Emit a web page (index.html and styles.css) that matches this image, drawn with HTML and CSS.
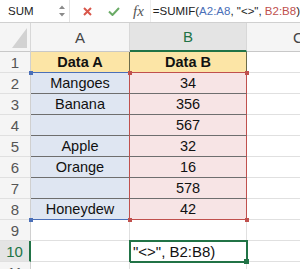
FILE: index.html
```html
<!DOCTYPE html>
<html lang="en">
<head>
    <meta charset="UTF-8">
    <title>SUMIF not blank</title>
    <link rel="stylesheet" href="styles.css">
</head>
<body>
    <div class="toolbar">
        <div class="namebox">
            <span class="name">SUM</span>
            <span class="spin">
                <svg width="6" height="12" viewBox="0 0 6 12"><path d="M0 4 L3 0.5 L6 4 Z M0 8 L3 11.5 L6 8 Z" fill="#8a8a8a"/></svg>
            </span>
        </div>
        <div class="actions">
            <svg class="icon-cancel" width="9" height="9" viewBox="0 0 9 9"><path d="M1 1 L8 8 M8 1 L1 8" stroke="#d9574b" stroke-width="2" fill="none"/></svg>
            <svg class="icon-enter" width="12" height="9" viewBox="0 0 12 9"><path d="M1 4.5 L4.5 8 L11 1" stroke="#6aab66" stroke-width="2" fill="none"/></svg>
            <span class="fx">fx</span>
        </div>
        <div class="formula">=SUMIF(<span class="ref-a">A2:A8</span>, "&lt;&gt;", <span class="ref-b">B2:B8</span>)</div>
    </div>

    <div class="sheet">
        <div class="cell head corner"></div>
        <div class="cell head">A</div>
        <div class="cell head active-col">B</div>
        <div class="cell head col-c">C</div>

        <div class="cell rownum">1</div>
        <div class="cell title a-title"><b>Data A</b><span class="handle blue tl"></span></div>
        <div class="cell title b-title"><b>Data B</b><span class="handle red bl"></span><span class="handle red br"></span></div>
        <div class="cell"></div>

        <div class="cell rownum">2</div>
        <div class="cell a">Mangoes</div>
        <div class="cell b">34</div>
        <div class="cell"></div>

        <div class="cell rownum">3</div>
        <div class="cell a">Banana</div>
        <div class="cell b">356</div>
        <div class="cell"></div>

        <div class="cell rownum">4</div>
        <div class="cell a"></div>
        <div class="cell b">567</div>
        <div class="cell"></div>

        <div class="cell rownum">5</div>
        <div class="cell a">Apple</div>
        <div class="cell b">32</div>
        <div class="cell"></div>

        <div class="cell rownum">6</div>
        <div class="cell a">Orange</div>
        <div class="cell b">16</div>
        <div class="cell"></div>

        <div class="cell rownum">7</div>
        <div class="cell a"></div>
        <div class="cell b">578</div>
        <div class="cell"></div>

        <div class="cell rownum">8</div>
        <div class="cell a a-last">Honeydew<span class="handle blue bl"></span></div>
        <div class="cell b b-last">42<span class="handle red bl"></span><span class="handle red br"></span></div>
        <div class="cell"></div>

        <div class="cell rownum">9</div>
        <div class="cell"></div>
        <div class="cell"></div>
        <div class="cell"></div>

        <div class="cell rownum active-row">10</div>
        <div class="cell"></div>
        <div class="cell editing">"&lt;&gt;", B2:B8)<span class="handle green br"></span></div>
        <div class="cell"></div>

        <div class="cell rownum">11</div>
        <div class="cell"></div>
        <div class="cell"></div>
        <div class="cell"></div>
    </div>
</body>
</html>
```

FILE: styles.css
```css
body {
    margin: 0;
    width: 300px;
    height: 269px;
    overflow: hidden;
    background-color: #fff;
    font-family: 'Liberation Sans', Arial, sans-serif;
    color: #111;
}
.toolbar {
    display: flex;
    align-items: center;
    height: 22px;
    border-bottom: 1px solid #d0d0d0;
    background-color: #fff;
}
.namebox {
    display: flex;
    align-items: center;
    justify-content: space-between;
    width: 71px;
    height: 100%;
    padding: 0 4px 0 8px;
    box-sizing: border-box;
    border-right: 1px solid #e2e2e2;
}
.name {
    font-size: 11.5px;
    color: #222;
}
.spin {
    display: flex;
}
.actions {
    display: flex;
    align-items: center;
    width: 82px;
    height: 100%;
    box-sizing: border-box;
    border-right: 1px solid #ededed;
}
.icon-cancel {
    margin-left: 13px;
}
.icon-enter {
    margin-left: 16px;
}
.fx {
    margin-left: 13px;
    font-family: 'Liberation Serif', 'Times New Roman', serif;
    font-style: italic;
    font-size: 15px;
    color: #555;
}
.formula {
    padding-left: 2px;
    font-size: 11.5px;
    color: #222;
    white-space: nowrap;
}
.ref-a { color: #4a6fb8; }
.ref-b { color: #c0504d; }

.sheet {
    display: grid;
    grid-template-columns: 31px 99px 117px 1fr;
    grid-template-rows: 29px;
    grid-auto-rows: 21px;
}
.cell {
    position: relative;
    display: flex;
    align-items: center;
    justify-content: center;
    border-right: 1px solid #e0e0e0;
    border-bottom: 1px solid #e0e0e0;
    font-size: 14.5px;
    white-space: nowrap;
}
.head {
    background-color: #f5f5f5;
    border-right-color: #d8d8d8;
    border-bottom-color: #c8c8c8;
    color: #444;
    font-size: 15px;
}
.col-c {
    justify-content: flex-start;
    padding-left: 46px;
}
.corner::after {
    content: '';
    position: absolute;
    right: 3px;
    bottom: 3px;
    width: 15px;
    height: 20px;
    background-color: #d2d2d2;
    clip-path: polygon(100% 0, 100% 100%, 0 100%);
}
.active-col {
    background-color: #e4e4e4;
    color: #217346;
    border-bottom: 2px solid #217346;
}
.rownum {
    background-color: #f5f5f5;
    border-right-color: #d0d0d0;
    color: #555;
    font-size: 15px;
}
.active-row {
    background-color: #e4e4e4;
    color: #217346;
    border-right: 2px solid #217346;
}
.title {
    background-color: #fce5a6;
    border-right-color: #6b6b4a;
}
.a-title { border-bottom-color: #4a6fb8; }
.b-title { border-bottom-color: #c0504d; }
.a {
    background-color: #dfe6f2;
    border-bottom-color: #6e6e6e;
    border-right-color: #c0504d;
}
.b {
    background-color: #f7e4e5;
    border-bottom-color: #6e6e6e;
    border-right-color: #c0504d;
}
.a-last { border-bottom-color: #4a6fb8; }
.b-last { border-bottom-color: #c0504d; }
.editing {
    justify-content: flex-start;
    padding-left: 3px;
    font-size: 15px;
    outline: 2px solid #217346;
    outline-offset: -1px;
}
.handle {
    position: absolute;
    width: 4px;
    height: 4px;
    z-index: 2;
}
.handle.blue { background-color: #4a6fb8; }
.handle.red { background-color: #c0504d; }
.handle.green { background-color: #217346; width: 5px; height: 5px; }
.handle.tl { left: -2px; bottom: -3px; }
.handle.bl { left: -2px; bottom: -3px; }
.handle.br { right: -3px; bottom: -3px; }
```
